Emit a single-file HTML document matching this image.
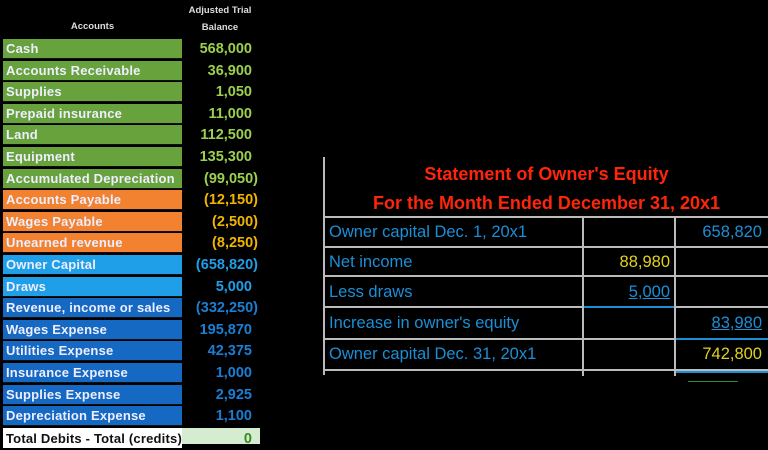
<!DOCTYPE html>
<html><head><style>
body{margin:0;width:768px;height:444px;background:#000;overflow:hidden;position:relative;font-family:"Liberation Sans",sans-serif;}
.r{position:absolute;left:3px;width:179px;height:20px;font-weight:bold;font-size:13px;color:#eef;line-height:20px;padding-left:3px;box-sizing:border-box;white-space:nowrap;overflow:hidden;border-bottom:1.6px solid #111;letter-spacing:0.2px}
.v{position:absolute;left:182px;width:70px;text-align:right;font-weight:bold;font-size:14.5px;line-height:21px;}
.g{background:#67a23d}.o{background:#f2822f}.lb{background:#1e9fe8}.db{background:#1669c2}
.t{position:absolute;font-size:16.5px;color:#1b8fd6;line-height:29px;}
.hl{position:absolute;background:#bbb;height:2px;}
.vl{position:absolute;background:#bbb;width:2px;}
</style></head><body>
<div style="position:absolute;left:185px;top:2px;width:70px;text-align:center;color:#ddd;font-weight:bold;font-size:9.5px;line-height:17px">Adjusted Trial<br>Balance</div>
<div style="position:absolute;left:3px;top:21px;width:179px;text-align:center;color:#ddd;font-weight:bold;font-size:9.5px">Accounts</div>

<div class="r g" style="top:39px">Cash</div><div class="v" style="top:39px;color:#9ccf4d">568,000</div>
<div class="r g" style="top:60.6px">Accounts Receivable</div><div class="v" style="top:60.6px;color:#9ccf4d">36,900</div>
<div class="r g" style="top:82.2px">Supplies</div><div class="v" style="top:82.2px;color:#9ccf4d">1,050</div>
<div class="r g" style="top:103.8px">Prepaid insurance</div><div class="v" style="top:103.8px;color:#9ccf4d">11,000</div>
<div class="r g" style="top:125.4px">Land</div><div class="v" style="top:125.4px;color:#9ccf4d">112,500</div>
<div class="r g" style="top:147px">Equipment</div><div class="v" style="top:147px;color:#9ccf4d">135,300</div>
<div class="r g" style="top:168.6px">Accumulated Depreciation</div><div class="v" style="top:168.6px;color:#9ccf4d;width:76px">(99,050)</div>
<div class="r o" style="top:190.2px">Accounts Payable</div><div class="v" style="top:190.2px;color:#f0b400;width:76px">(12,150)</div>
<div class="r o" style="top:211.8px">Wages Payable</div><div class="v" style="top:211.8px;color:#f0b400;width:76px">(2,500)</div>
<div class="r o" style="top:233.4px">Unearned revenue</div><div class="v" style="top:233.4px;color:#f0b400;width:76px">(8,250)</div>
<div class="r lb" style="top:255px">Owner Capital</div><div class="v" style="top:255px;color:#1e9fe8;width:76px">(658,820)</div>
<div class="r lb" style="top:276.6px">Draws</div><div class="v" style="top:276.6px;color:#1e9fe8">5,000</div>
<div class="r db" style="top:298.2px">Revenue, income or sales</div><div class="v" style="top:298.2px;color:#1a7fd4;width:76px">(332,250)</div>
<div class="r db" style="top:319.8px">Wages Expense</div><div class="v" style="top:319.8px;color:#1a7fd4">195,870</div>
<div class="r db" style="top:341.4px">Utilities Expense</div><div class="v" style="top:341.4px;color:#1a7fd4">42,375</div>
<div class="r db" style="top:363px">Insurance Expense</div><div class="v" style="top:363px;color:#1a7fd4">1,000</div>
<div class="r db" style="top:384.6px">Supplies Expense</div><div class="v" style="top:384.6px;color:#1a7fd4">2,925</div>
<div class="r db" style="top:406.2px">Depreciation Expense</div><div class="v" style="top:406.2px;color:#1a7fd4">1,100</div>
<div class="r" style="top:428px;background:#fff;color:#111;border:none;line-height:22px">Total Debits - Total (credits)</div>
<div style="position:absolute;left:182px;top:428px;width:78px;height:16px;background:#d6ecd0"></div>
<div class="v" style="top:429px;color:#3a8a20;left:182px;width:70px">0</div>

<div class="vl" style="left:323px;top:157px;height:218px"></div>
<div style="position:absolute;left:325px;width:443px;top:160px;text-align:center;color:#ff250a;font-weight:bold;font-size:18px;line-height:29px">Statement of Owner's Equity<br>For the Month Ended December 31, 20x1</div>
<div class="hl" style="left:325px;top:216px;width:443px"></div>
<div class="hl" style="left:325px;top:246px;width:443px"></div>
<div class="hl" style="left:325px;top:275px;width:443px"></div>
<div class="hl" style="left:325px;top:306px;width:443px"></div>
<div class="hl" style="left:325px;top:338px;width:443px"></div>
<div class="hl" style="left:325px;top:369px;width:443px"></div>
<div class="vl" style="left:582px;top:216px;height:160px"></div>
<div class="vl" style="left:674px;top:216px;height:160px"></div>
<div style="position:absolute;left:584px;top:306px;width:90px;height:2px;background:#1b8fd6"></div>
<div style="position:absolute;left:676px;top:338px;width:92px;height:2px;background:#1b8fd6"></div>
<div style="position:absolute;left:676px;top:371px;width:92px;height:2px;background:#1b8fd6"></div>
<div style="position:absolute;left:688px;top:381px;width:50px;height:1px;background:#2a8a3a"></div>

<div class="t" style="left:329px;top:218px">Owner capital Dec. 1, 20x1</div>
<div class="t" style="left:676px;top:218px;width:86px;text-align:right">658,820</div>
<div class="t" style="left:329px;top:248px">Net income</div>
<div class="t" style="left:584px;top:248px;width:86px;text-align:right;color:#e0d21e">88,980</div>
<div class="t" style="left:329px;top:278px">Less draws</div>
<div class="t" style="left:584px;top:278px;width:86px;text-align:right;text-decoration:underline">5,000</div>
<div class="t" style="left:329px;top:309px">Increase in owner's equity</div>
<div class="t" style="left:676px;top:309px;width:86px;text-align:right;text-decoration:underline">83,980</div>
<div class="t" style="left:329px;top:340px">Owner capital Dec. 31, 20x1</div>
<div class="t" style="left:676px;top:340px;width:86px;text-align:right;color:#e0d21e">742,800</div>
</body></html>
